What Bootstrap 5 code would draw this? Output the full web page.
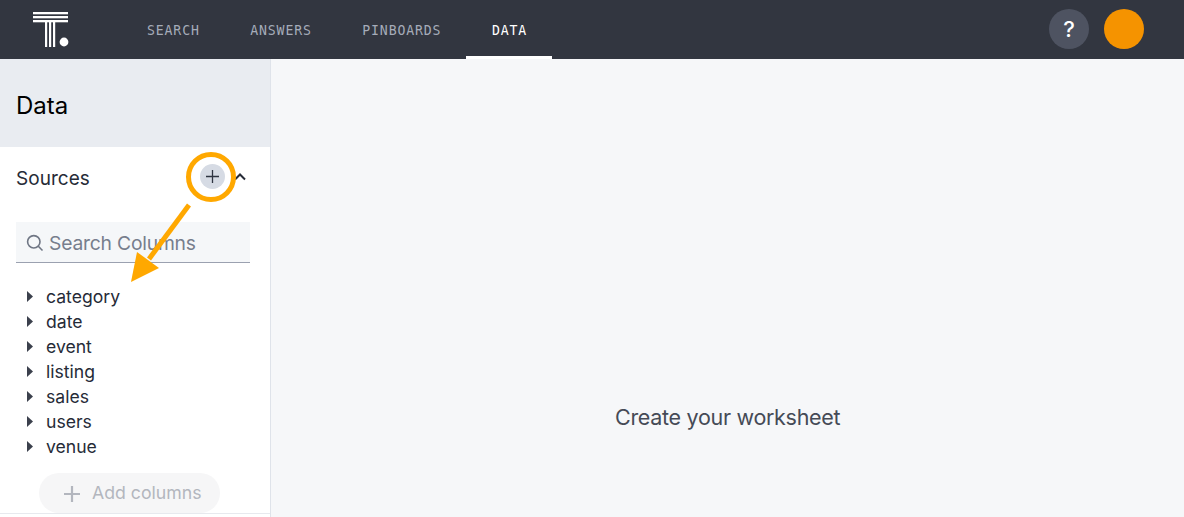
<!DOCTYPE html>
<html lang="en">
<head>
<meta charset="utf-8">
<title>Data</title>
<link href="https://cdn.jsdelivr.net/npm/bootstrap@5.3.0/dist/css/bootstrap.min.css" rel="stylesheet">
<style>
html,body{height:517px;overflow:hidden}
body{font-family:Inter,"Liberation Sans",sans-serif;background:#f6f7f9;color:#2f3542;position:relative}
.topbar{height:59px;background:#323640}
.logo-box{width:121.5px;padding-left:32px;padding-top:1px}
.tab-link{font-family:"DejaVu Sans Mono","Liberation Mono",monospace;font-size:13.2px;letter-spacing:.85px;color:#a5acb9;height:59px;line-height:61px;padding:0 25px 0 25.5px;text-decoration:none;display:block}
.tab-link.on{color:#fff;border-bottom:3px solid #fff}
.round-help{width:40px;height:40px;border-radius:50%;background:#4e5361;color:#fff;font-size:22px;font-weight:500;line-height:40px;text-align:center;margin-top:-1px}
.round-user{width:40px;height:40px;border-radius:50%;background:#f59300;margin-left:15px;margin-right:40px;margin-top:-1px}
.side{width:271px;height:458px;background:#fff;border-right:1px solid #dfe3ea}
.side-head{height:88px;background:#e9ecf1;color:#000;font-size:24px;padding-left:16px;line-height:94px;font-weight:400}
.src-row{height:62px;padding:0 16px;font-size:19px;line-height:63px;letter-spacing:.03px;color:#262b37}
.add-dot{width:25px;height:25px;border-radius:50%;background:#d6dbe4;margin-left:110px;margin-top:17px}
.chev{margin-left:8px;margin-top:25px;width:14px;height:9px}
.find{margin:13px 20px 0 16px;height:41px;background:#f5f7f9;border-bottom:1px solid #9ba1b0;color:#777e8d;font-size:19.3px;padding:2px 0 0 10px;letter-spacing:-.2px}
.find span{margin-left:1px}
.tree{margin:21px 0 0 0;padding:0;list-style:none}
.tree li{height:25px;line-height:25px;font-size:17.6px;padding-left:27px;color:#262b37}
.tree svg{margin-right:12px;vertical-align:1px}
.add-wrap{margin-top:14px;border-bottom:1px solid #e7e9ee;padding-left:39px;box-sizing:content-box;height:40px}
.add-cols{width:181px;height:40px;border-radius:20px;background:#f6f6f7;color:#b3b6be;font-size:17.7px;padding:1px 0 0 25px}
.main-area{color:#454a56;font-size:21.5px;padding-top:344px;padding-left:344px;letter-spacing:-.3px;line-height:28px}
.overlay{position:absolute;left:0;top:0;pointer-events:none}
</style>
</head>
<body>
<nav class="topbar d-flex align-items-center">
  <div class="logo-box">
    <svg width="38" height="36" viewBox="0 0 38 36" class="d-block">
      <g fill="#fff">
        <rect x="1" y="0" width="35" height="2.3"/><rect x="1" y="4" width="35" height="2.3"/><rect x="1" y="8" width="35" height="2.3"/>
        <rect x="13" y="10" width="2.2" height="25"/><rect x="17" y="10" width="2.2" height="25"/><rect x="21" y="10" width="2.2" height="25"/>
        <circle cx="32" cy="30" r="4.4"/>
      </g>
    </svg>
  </div>
  <a class="tab-link" href="#">SEARCH</a>
  <a class="tab-link" href="#">ANSWERS</a>
  <a class="tab-link" href="#">PINBOARDS</a>
  <a class="tab-link on" href="#">DATA</a>
  <div class="round-help ms-auto">?</div>
  <div class="round-user"></div>
</nav>
<div class="d-flex">
  <aside class="side">
    <div class="side-head">Data</div>
    <div class="src-row d-flex align-items-start">
      <span>Sources</span>
      <span class="add-dot d-flex align-items-center justify-content-center">
        <svg width="13" height="13" viewBox="0 0 13 13"><path d="M6.5 0v13M0 6.5h13" stroke="#2f3542" stroke-width="1.3"/></svg>
      </span>
      <svg class="chev" viewBox="0 0 14 9"><path d="M2 7.5 7 2.5l5 5" fill="none" stroke="#262b37" stroke-width="2"/></svg>
    </div>
    <div class="find d-flex align-items-center">
      <svg width="18" height="18" viewBox="0 0 18 18" class="me-1 flex-shrink-0"><circle cx="7.8" cy="7.8" r="6.2" fill="none" stroke="#6f7684" stroke-width="1.6"/><path d="M12.3 12.3 16.5 16.5" stroke="#6f7684" stroke-width="1.6"/></svg>
      <span>Search Columns</span>
    </div>
    <ul class="tree">
      <li><svg width="7" height="11" viewBox="0 0 7 11"><path d="M0 0l6 5.5L0 11z" fill="#3b404c"/></svg>category</li>
      <li><svg width="7" height="11" viewBox="0 0 7 11"><path d="M0 0l6 5.5L0 11z" fill="#3b404c"/></svg>date</li>
      <li><svg width="7" height="11" viewBox="0 0 7 11"><path d="M0 0l6 5.5L0 11z" fill="#3b404c"/></svg>event</li>
      <li><svg width="7" height="11" viewBox="0 0 7 11"><path d="M0 0l6 5.5L0 11z" fill="#3b404c"/></svg>listing</li>
      <li><svg width="7" height="11" viewBox="0 0 7 11"><path d="M0 0l6 5.5L0 11z" fill="#3b404c"/></svg>sales</li>
      <li><svg width="7" height="11" viewBox="0 0 7 11"><path d="M0 0l6 5.5L0 11z" fill="#3b404c"/></svg>users</li>
      <li><svg width="7" height="11" viewBox="0 0 7 11"><path d="M0 0l6 5.5L0 11z" fill="#3b404c"/></svg>venue</li>
    </ul>
    <div class="add-wrap">
      <div class="add-cols d-flex align-items-center">
        <svg width="16" height="16" viewBox="0 0 16 16" class="flex-shrink-0 me-2"><path d="M8 0v16M0 8h16" stroke="#b3b6be" stroke-width="2.2"/></svg>
        <span class="ms-1">Add columns</span>
      </div>
    </div>
  </aside>
  <main class="main-area flex-grow-1">Create your worksheet</main>
</div>
<svg class="overlay" width="1184" height="517" viewBox="0 0 1184 517">
  <circle cx="211" cy="177" r="22.5" fill="none" stroke="#ffa800" stroke-width="5"/>
  <path d="M189 205 149 259" stroke="#ffa800" stroke-width="5" fill="none"/>
  <path d="M131 282 137 252 159 268z" fill="#ffa800"/>
</svg>
</body>
</html>
